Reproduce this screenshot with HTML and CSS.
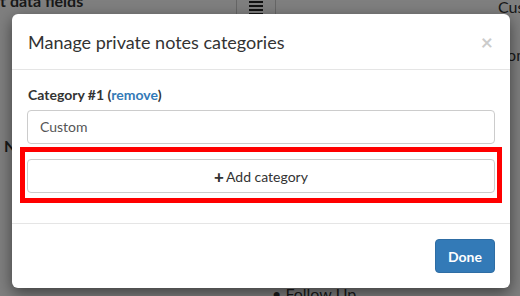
FILE: index.html
```html
<!DOCTYPE html>
<html>
<head>
<meta charset="utf-8">
<link rel="stylesheet" href="styles.css">
</head>
<body>
<div class="page">
  <div class="bg-top">
    <div class="bg-title">Edit data fields</div>
    <div class="bg-icon"><span></span><span></span><span></span><span></span></div>
  </div>
  <div class="bg-cus">Custom</div>
  <div class="bg-om">Custom</div>
  <div class="bg-n">Notes</div>
  <div class="bg-follow">• Follow Up</div>
  <div class="backdrop"></div>
</div>
<div class="modal">
  <div class="modal-header">
    <h4 class="modal-title">Manage private notes categories</h4>
    <span class="close">×</span>
  </div>
  <div class="modal-body">
    <label class="label">Category #1 (<a class="link">remove</a>)</label>
    <div class="input">Custom</div>
    <div class="add-wrap">
      <div class="btn-add"><span class="plus">+</span>Add category</div>
    </div>
  </div>
  <div class="modal-footer">
    <div class="btn-done">Done</div>
  </div>
</div>
</body>
</html>
```

FILE: styles.css
```css
* { box-sizing: border-box; }
html, body { margin: 0; padding: 0; }
body {
  width: 520px;
  height: 296px;
  overflow: hidden;
  font-family: Lato, "Liberation Sans", sans-serif;
  color: #333;
  position: relative;
}
.page {
  width: 520px;
  height: 296px;
  background: #fff;
  position: relative;
  overflow: hidden;
}
.bg-top {
  display: flex;
  height: 22px;
  align-items: flex-start;
}
.bg-title {
  font-weight: bold;
  font-size: 16px;
  margin-left: -22px;
  margin-top: -9px;
  width: 258px;
  white-space: nowrap;
}
.bg-icon {
  width: 40px;
  height: 22px;
  border-left: 1px solid #ccc;
  border-right: 1px solid #ccc;
  display: flex;
  flex-direction: column;
  align-items: center;
  padding-top: 1px;
  gap: 2px;
}
.bg-icon span { width: 14px; height: 2px; background: #222; }
.bg-cus {
  position: absolute;
  left: 498px;
  top: -3px;
  font-size: 16px;
  white-space: nowrap;
}
.bg-om {
  position: absolute;
  left: 475px;
  top: 45px;
  font-size: 16px;
  white-space: nowrap;
}
.bg-n {
  position: absolute;
  left: 4px;
  top: 136px;
  font-size: 16px;
  font-weight: bold;
}
.bg-follow {
  position: absolute;
  left: 272px;
  top: 284px;
  font-size: 16px;
}
.backdrop {
  position: absolute;
  inset: 0;
  background: rgba(0,0,0,0.5);
}
.modal {
  position: absolute;
  left: 12px;
  top: 14px;
  width: 498px;
  height: 274px;
  background: #fff;
  border-radius: 6px;
  box-shadow: 0 5px 15px rgba(0,0,0,0.5);
  display: flex;
  flex-direction: column;
}
.modal-header {
  height: 56px;
  padding: 15px 15px 0 16px;
  border-bottom: 1px solid #e5e5e5;
  display: flex;
  align-items: flex-start;
}
.modal-title {
  margin: 0;
  font-size: 18px;
  font-weight: normal;
  line-height: 26px;
  color: #333;
}
.close {
  margin-left: auto;
  font-size: 21px;
  font-weight: bold;
  line-height: 26px;
  color: #000;
  opacity: 0.2;
  margin-right: 2px;
}
.modal-body {
  padding: 15px 15px 0 15px;
  display: flex;
  flex-direction: column;
}
.label {
  font-weight: bold;
  font-size: 14px;
  line-height: 20px;
  margin-bottom: 5px;
  padding-left: 1px;
}
.link { color: #337ab7; }
.input {
  height: 34px;
  border: 1px solid #ccc;
  border-radius: 4px;
  padding: 6px 12px;
  font-size: 14px;
  line-height: 20px;
  color: #555;
  margin-bottom: 15px;
}
.add-wrap {
  position: relative;
  margin-bottom: 30px;
}
.add-wrap::after {
  content: "";
  position: absolute;
  left: -7px;
  right: -7px;
  top: -12px;
  bottom: -10px;
  border: 5px solid #f00;
  pointer-events: none;
}
.btn-add {
  height: 34px;
  border: 1px solid #ccc;
  border-radius: 4px;
  display: flex;
  align-items: center;
  justify-content: center;
  font-size: 14px;
  color: #333;
  background: #fff;
}
.plus {
  font-weight: 900;
  font-size: 17px;
  margin-right: 2px;
  line-height: 1;
}
.modal-footer {
  border-top: 1px solid #e5e5e5;
  padding: 15px;
  display: flex;
  justify-content: flex-end;
}
.btn-done {
  width: 60px;
  height: 34px;
  background: #337ab7;
  border: 1px solid #2e6da4;
  border-radius: 4px;
  color: #fff;
  font-size: 14px;
  font-weight: bold;
  display: flex;
  align-items: center;
  justify-content: center;
}
```
